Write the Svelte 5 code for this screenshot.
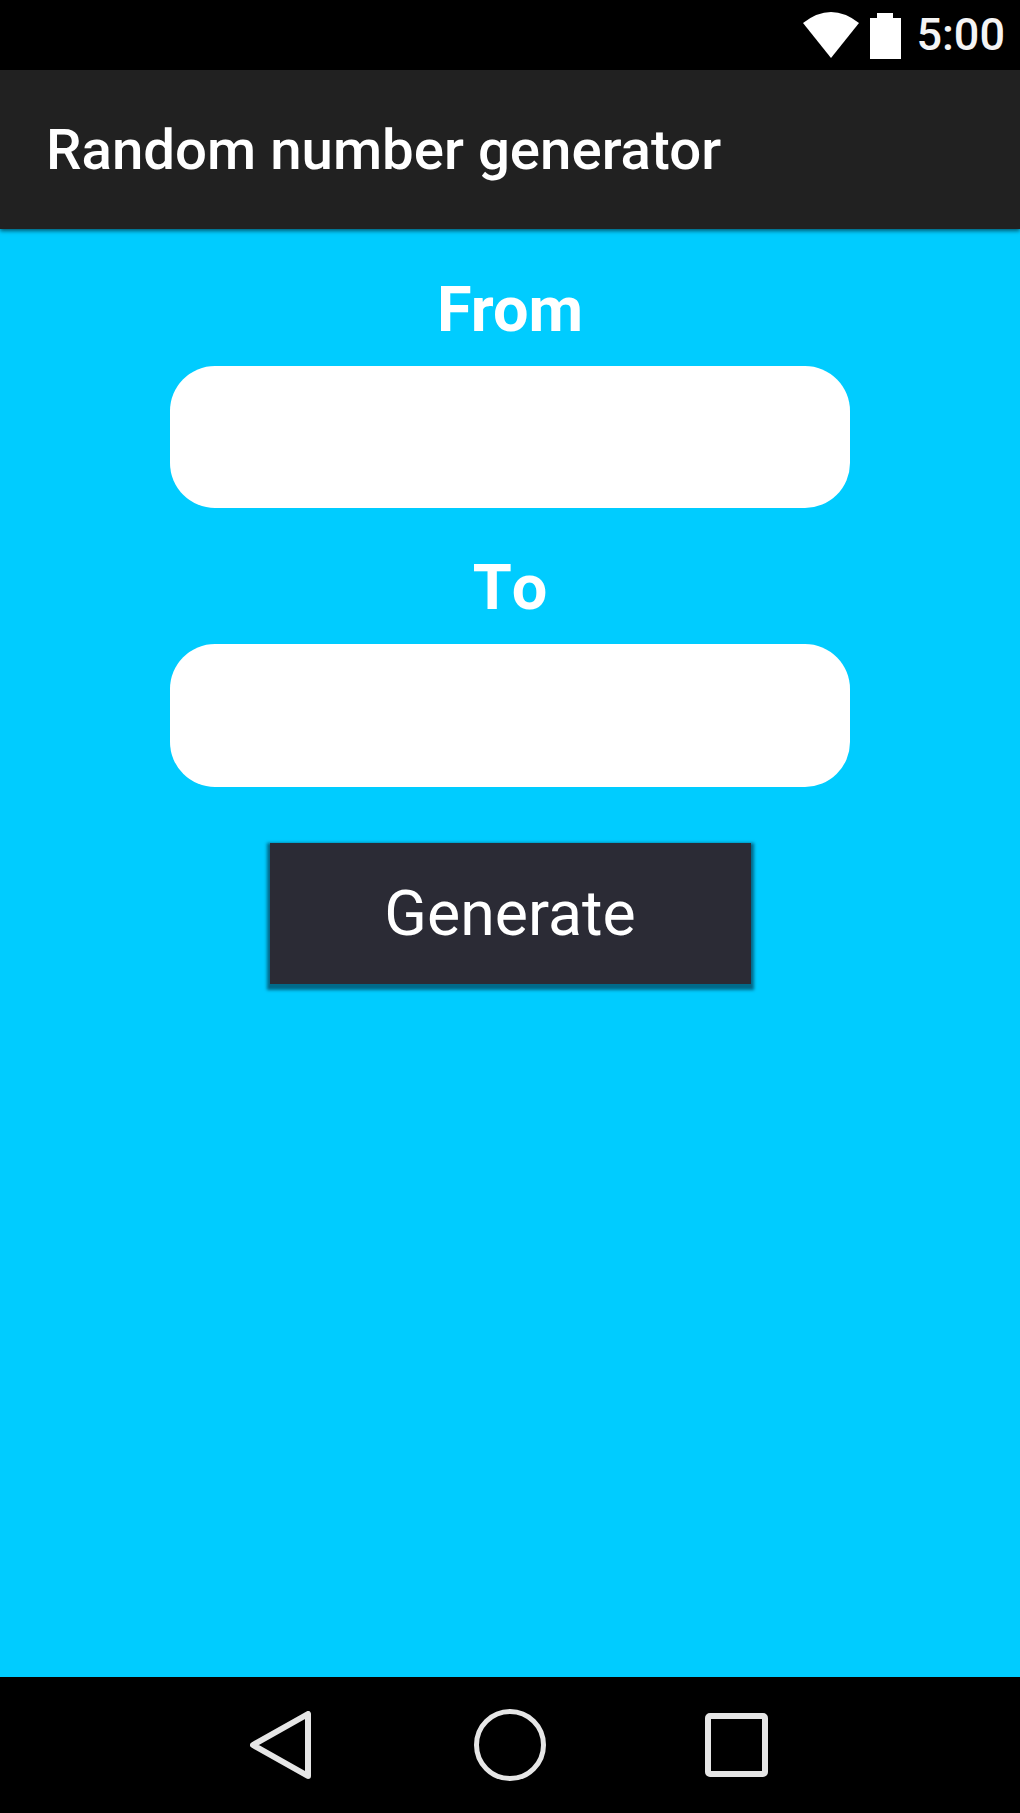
<script>
  let from = $state('');
  let to = $state('');
</script>

<div class="screen">
  <header class="status">
    <svg class="wifi" viewBox="0 0 56 46" aria-hidden="true"><path d="M0 11Q28-11 56 11L28 46Z" /></svg>
    <svg class="battery" viewBox="0 0 31 46" aria-hidden="true"><path d="M7 5V0H23V5H31V46H0V5Z" /></svg>
    <span class="time">5:00</span>
  </header>

  <div class="appbar"><h1>Random number generator</h1></div>

  <main>
    <label for="from">From</label>
    <input id="from" type="text" bind:value={from} />
    <label class="second" for="to">To</label>
    <input id="to" class="tall" type="text" bind:value={to} />
    <button type="button">Generate</button>
  </main>

  <nav>
    <svg class="back" viewBox="0 0 61 68" aria-hidden="true"><path d="M3 34L58 3V65Z" /></svg>
    <svg class="home" viewBox="0 0 72 72" aria-hidden="true"><circle cx="36" cy="36" r="33.5" /></svg>
    <svg class="recent" viewBox="0 0 63 64" aria-hidden="true"><rect x="3" y="3" width="57" height="58" rx="2" /></svg>
  </nav>
</div>

<style>
  :global(body) {
    margin: 0;
    background: #00ccff;
  }

  .screen {
    display: flex;
    flex-direction: column;
    width: 1020px;
    height: 1813px;
    overflow: hidden;
    font-family: Roboto, "Liberation Sans", sans-serif;
    color: #fff;
    background: #00ccff;
  }

  .status {
    display: flex;
    flex: none;
    align-items: center;
    justify-content: flex-end;
    height: 70px;
    padding-right: 15px;
    box-sizing: border-box;
    background: #000;
  }

  .wifi {
    width: 56px;
    height: 46px;
    margin-right: 11px;
    fill: #fff;
  }

  .battery {
    width: 31px;
    height: 46px;
    margin-top: 2px;
    margin-right: 15px;
    fill: #fff;
  }

  .time {
    font-size: 45px;
    font-weight: 500;
    line-height: 70px;
    color: #f4f4f4;
  }

  .appbar {
    display: flex;
    flex: none;
    align-items: center;
    z-index: 1;
    height: 159px;
    padding-left: 46px;
    box-sizing: border-box;
    background: #212121;
    box-shadow: 0 2px 4px rgba(0, 0, 0, 0.55);
  }

  h1 {
    margin: 0;
    font-size: 56.4px;
    font-weight: 500;
    line-height: 72px;
  }

  main {
    display: flex;
    flex: 1;
    flex-direction: column;
    align-items: center;
    padding-top: 45px;
  }

  label {
    height: 72px;
    margin-bottom: 20px;
    font-size: 63px;
    font-weight: 700;
    line-height: 72px;
  }

  .second {
    margin-top: 44px;
    font-kerning: none;
  }

  input {
    display: block;
    width: 680px;
    height: 142px;
    padding: 0 45px;
    box-sizing: border-box;
    border: 0;
    border-radius: 45px;
    outline: 0;
    background: #fff;
    font: inherit;
    font-size: 50px;
  }

  .tall {
    height: 143px;
  }

  button {
    width: 481px;
    height: 141px;
    margin-top: 56px;
    padding: 0;
    border: 0;
    background: #2b2b35;
    box-shadow: 0 3px 3px 3px rgba(0, 40, 60, 0.6);
    color: #fff;
    font: inherit;
    font-size: 62.6px;
  }

  nav {
    display: flex;
    flex: none;
    align-items: center;
    justify-content: center;
    height: 136px;
    padding-right: 2px;
    box-sizing: border-box;
    background: #000;
  }

  nav svg {
    fill: none;
    stroke: #e6e6e6;
    stroke-linejoin: round;
    stroke-width: 6;
  }

  .back {
    width: 61px;
    height: 68px;
  }

  .home {
    width: 72px;
    height: 72px;
    margin: 0 159px 0 163px;
    stroke-width: 5;
  }

  .recent {
    width: 63px;
    height: 64px;
  }
</style>
